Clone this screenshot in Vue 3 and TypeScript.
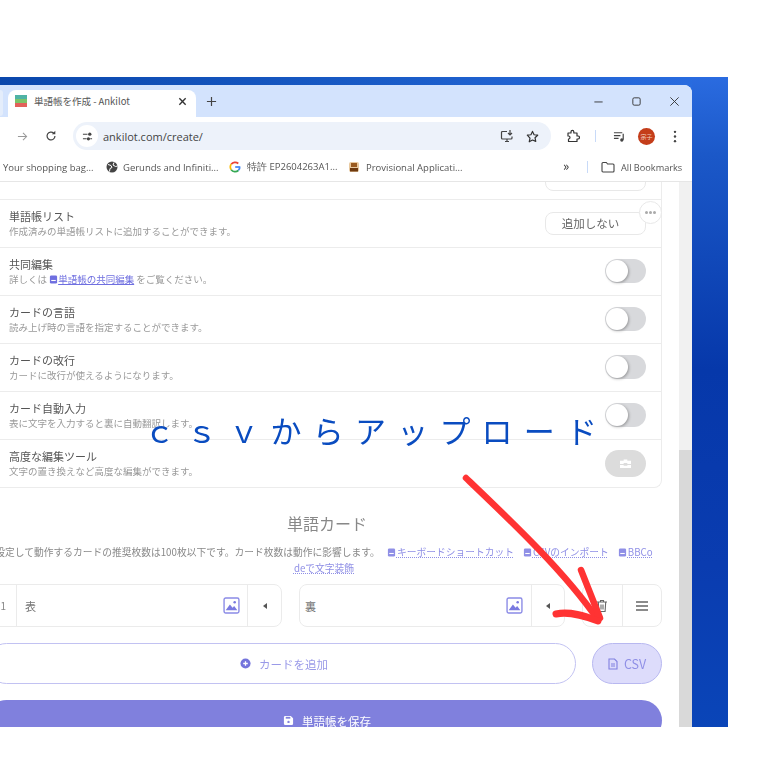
<script setup lang="ts">
interface Row { title: string; desc: string; kind: 'cut' | 'select' | 'link' | 'toggle' | 'tool' }
const rows: Row[] = [
  { title: '', desc: '作成者以外のユーザーが利用できる機能を制限します。', kind: 'cut' },
  { title: '単語帳リスト', desc: '作成済みの単語帳リストに追加することができます。', kind: 'select' },
  { title: '共同編集', desc: '', kind: 'link' },
  { title: 'カードの言語', desc: '読み上げ時の言語を指定することができます。', kind: 'toggle' },
  { title: 'カードの改行', desc: 'カードに改行が使えるようになります。', kind: 'toggle' },
  { title: 'カード自動入力', desc: '表に文字を入力すると裏に自動翻訳します。', kind: 'toggle' },
  { title: '高度な編集ツール', desc: '文字の置き換えなど高度な編集ができます。', kind: 'tool' },
]
</script>

<template>
  <div class="page">
    <div class="desktop">
      <div class="window">
        <div class="tabstrip">
          <div class="prevtab"></div>
          <div class="tab">
            <svg class="fav" viewBox="0 0 12 12" width="12" height="12">
              <rect y="0" width="12" height="4" fill="#4fb3a5" />
              <rect y="4" width="12" height="4" fill="#7cc36a" />
              <rect y="8" width="12" height="4" fill="#e2615a" />
            </svg>
            <span class="tabtitle">単語帳を作成 - Ankilot</span>
            <svg class="tabx" viewBox="0 0 10 10" width="9" height="9"><path d="M1.5 1.5l7 7M8.5 1.5l-7 7" stroke="#333" stroke-width="1.5" /></svg>
          </div>
          <svg class="plus" viewBox="0 0 12 12" width="11" height="11"><path d="M6 1v10M1 6h10" stroke="#444" stroke-width="1.3" /></svg>
          <div class="winbtns">
            <svg viewBox="0 0 12 12" width="11" height="11"><path d="M1.5 6.5h9" stroke="#333" stroke-width="1" /></svg>
            <svg viewBox="0 0 12 12" width="11" height="11"><rect x="2" y="2" width="8" height="8" rx="1.5" fill="none" stroke="#333" stroke-width="1" /></svg>
            <svg viewBox="0 0 12 12" width="11" height="11"><path d="M1.5 1.5l9 9M10.5 1.5l-9 9" stroke="#333" stroke-width="1" /></svg>
          </div>
        </div>

        <div class="toolbar">
          <svg class="nav-fwd" viewBox="0 0 12 12" width="11" height="11"><path d="M1 6h9.5M6.5 2l4 4-4 4" fill="none" stroke="#999" stroke-width="1.1" /></svg>
          <svg class="reload" viewBox="0 0 14 14" width="12" height="12"><path d="M11.6 7a4.6 4.6 0 1 1-1.4-3.3" fill="none" stroke="#444" stroke-width="1.4" /><path d="M12 1v4H8z" fill="#444" /></svg>
          <div class="omnibox">
            <span class="sitebtn">
              <svg viewBox="0 0 12 12" width="11" height="11"><path d="M1 3.5h5M9 8.500h2M1 8.500h4" stroke="#444" stroke-width="1.200" /><circle cx="8.500" cy="3.500" r="1.800" fill="#444" /><circle cx="7" cy="8.500" r="1.800" fill="#444" /></svg>
            </span>
            <span class="url">ankilot.com/create/</span>
            <svg class="omni-a" viewBox="0 0 14 14" width="14" height="14"><path d="M7 2.500H2.500a1 1 0 0 0-1 1V9a1 1 0 0 0 1 1h8.500a1 1 0 0 0 1-1V7.500M5 12.500h4M7 10v2.500" fill="none" stroke="#444" stroke-width="1.200" /><path d="M10 1v4.500M8 4l2 2 2-2" fill="none" stroke="#444" stroke-width="1.200" /></svg>
            <svg class="omni-b" viewBox="0 0 14 14" width="13" height="13"><path d="M7 1.500l1.700 3.600 3.900.5-2.900 2.700.8 3.900L7 10.800l-3.500 1.900.8-3.900L1.400 5.600l3.900-.5z" fill="none" stroke="#333" stroke-width="1.300" stroke-linejoin="round" /></svg>
          </div>
          <svg class="ext" viewBox="0 0 14 14" width="14" height="14"><path d="M2 4h3V2.800a1.400 1.400 0 0 1 2.800 0V4h3.200v3h1a1.500 1.500 0 0 1 0 3h-1v2.500H2.500V10a1.500 1.500 0 0 0 0-3H2z" fill="none" stroke="#333" stroke-width="1.200" stroke-linejoin="round" /></svg>
          <span class="tsep"></span>
          <svg class="music" viewBox="0 0 14 14" width="13" height="13"><path d="M1 3h9M1 6h7M1 9h5" stroke="#444" stroke-width="1.200" /><path d="M11 4v6.500" stroke="#444" stroke-width="1.300" /><circle cx="9.500" cy="10.800" r="1.800" fill="#444" /></svg>
          <span class="avatar">宗子</span>
          <svg class="dots" viewBox="0 0 4 14" width="4" height="13"><circle cx="2" cy="2" r="1.300" fill="#444" /><circle cx="2" cy="7" r="1.300" fill="#444" /><circle cx="2" cy="12" r="1.300" fill="#444" /></svg>
        </div>

        <div class="bookmarks">
          <span class="bm bm1">Your shopping bag...</span>
          <svg class="bmi" viewBox="0 0 12 12" width="12" height="12"><circle cx="6" cy="6" r="5.500" fill="#444" /><path d="M2 3.500l3 1 1 2-2 1-.5 3M8 1.500L7 4l2.500 1.500 2-.5" fill="none" stroke="#fff" stroke-width="1" /></svg>
          <span class="bm bm2">Gerunds and Infiniti...</span>
          <svg class="bmi" viewBox="0 0 12 12" width="12" height="12">
            <path d="M10.800 6H6.200" fill="none" stroke="#4285f4" stroke-width="1.700" />
            <path d="M10.700 5.500A4.800 4.800 0 0 1 9.300 9.500" fill="none" stroke="#4285f4" stroke-width="1.700" />
            <path d="M2.200 3.300A4.800 4.800 0 0 1 9.300 2.500" fill="none" stroke="#ea4335" stroke-width="1.700" />
            <path d="M2.200 8.700a4.800 4.800 0 0 1 0-5.400" fill="none" stroke="#fbbc05" stroke-width="1.700" />
            <path d="M2.200 8.700a4.800 4.800 0 0 0 7.100.8" fill="none" stroke="#34a853" stroke-width="1.700" />
          </svg>
          <span class="bm bm3">特許 EP2604263A1...</span>
          <svg class="bmi" viewBox="0 0 12 12" width="12" height="12"><rect x="1" y="1" width="10" height="10" rx="2" fill="#e8c9a0" /><rect x="3" y="2" width="6" height="4" fill="#9a5a20" /><rect x="2" y="7" width="8" height="3.500" fill="#6e3a10" /></svg>
          <span class="bm bm4">Provisional Applicati...</span>
          <span class="more">»</span>
          <span class="bsep"></span>
          <svg class="folder" viewBox="0 0 14 12" width="14" height="12"><path d="M1 2.500a1 1 0 0 1 1-1h3.300l1.300 1.500H12a1 1 0 0 1 1 1v6a1 1 0 0 1-1 1H2a1 1 0 0 1-1-1z" fill="none" stroke="#444" stroke-width="1.100" /></svg>
          <span class="bm bm5">All Bookmarks</span>
        </div>

        <div class="viewport">
          <div class="content">
            <div class="inner">
              <section class="panel">
                <div v-for="(r, i) in rows" :key="i" class="row">
                  <div class="rowtext">
                    <div v-if="r.title" class="rtitle">{{ r.title }}</div>
                    <div v-if="r.kind === 'link'" class="rdesc">
                      詳しくは
                      <span class="ilink">
                        <svg viewBox="0 0 10 10" width="9" height="9"><rect x="1" y="0.500" width="8" height="9" rx="1.500" fill="#6f6fe0" /><rect x="2.500" y="5.500" width="5" height="1.200" fill="#fff" /></svg>
                        <u>単語帳の共同編集</u>
                      </span>
                      をご覧ください。
                    </div>
                    <div v-else class="rdesc">{{ r.desc }}</div>
                  </div>
                  <span v-if="r.kind === 'cut'" class="selectbtn cutbtn"></span>
                  <template v-if="r.kind === 'select'">
                    <span class="selectbtn">追加しない</span>
                    <span class="morebtn"><i></i><i></i><i></i></span>
                  </template>
                  <span v-if="r.kind === 'toggle' || r.kind === 'link'" class="toggle"><span class="knob"></span></span>
                  <span v-if="r.kind === 'tool'" class="toolbtn">
                    <svg viewBox="0 0 14 12" width="13" height="11"><path d="M5 3V1.500h4V3h4v3.500H9V5.500H5v1H1V3zM1 7.500h4V8.500h4v-1h4V11H1z" fill="#fff" /></svg>
                  </span>
                </div>
              </section>

              <h2 class="heading">単語カード</h2>
              <p class="info">
                設定して動作するカードの推奨枚数は100枚以下です。カード枚数は動作に影響します。
                <a class="dl"><svg viewBox="0 0 10 10" width="9" height="9"><rect x="1" y="0.500" width="8" height="9" rx="1.500" fill="#8f8fe6" /><rect x="2.500" y="5.500" width="5" height="1.200" fill="#fff" /></svg>キーボードショートカット</a>
                <a class="dl"><svg viewBox="0 0 10 10" width="9" height="9"><rect x="1" y="0.500" width="8" height="9" rx="1.500" fill="#8f8fe6" /><rect x="2.500" y="5.500" width="5" height="1.200" fill="#fff" /></svg>CSVのインポート</a>
                <a class="dl"><svg viewBox="0 0 10 10" width="9" height="9"><rect x="1" y="0.500" width="8" height="9" rx="1.500" fill="#8f8fe6" /><rect x="2.500" y="5.500" width="5" height="1.200" fill="#fff" /></svg>BBCo<br />deで文字装飾</a>
              </p>

              <div class="cardrow">
                <div class="cardbox front">
                  <span class="num">1</span>
                  <span class="face">表</span>
                  <svg class="pic" viewBox="0 0 16 16" width="17" height="17"><rect x="1" y="1" width="14" height="14" rx="1.500" fill="#fff" stroke="#8b8be6" stroke-width="1.300" /><path d="M2.500 12.500l4-5.500 2.500 3 1.500-1.500 3 4z" fill="#7a7ae0" /><circle cx="11" cy="5" r="1.200" fill="#7a7ae0" /></svg>
                  <span class="caret"><i></i></span>
                </div>
                <div class="cardbox rear">
                  <span class="face">裏</span>
                  <svg class="pic" viewBox="0 0 16 16" width="17" height="17"><rect x="1" y="1" width="14" height="14" rx="1.500" fill="#fff" stroke="#8b8be6" stroke-width="1.300" /><path d="M2.500 12.500l4-5.500 2.500 3 1.500-1.500 3 4z" fill="#7a7ae0" /><circle cx="11" cy="5" r="1.200" fill="#7a7ae0" /></svg>
                  <span class="caret"><i></i></span>
                </div>
                <div class="cardbox actions">
                  <span class="act">
                    <svg viewBox="0 0 12 14" width="12" height="14"><path d="M1 3h10M4.500 3V1.500h3V3M2.300 3l.6 9.500h6.200l.6-9.500M5 5.500v5M7 5.500v5" fill="none" stroke="#666" stroke-width="1.100" /></svg>
                  </span>
                  <span class="act bars">
                    <svg viewBox="0 0 12 10" width="12" height="10"><path d="M0 1h12M0 5h12M0 9h12" stroke="#666" stroke-width="1.300" /></svg>
                  </span>
                </div>
              </div>

              <div class="btnrow">
                <button class="addbtn">
                  <svg viewBox="0 0 12 12" width="11" height="11"><circle cx="6" cy="6" r="5.500" fill="#7474dc" /><path d="M6 3.500v5M3.500 6h5" stroke="#fff" stroke-width="1.400" /></svg>
                  カードを追加
                </button>
                <button class="csvbtn">
                  <svg viewBox="0 0 10 12" width="10" height="12"><path d="M1 1h5.500L9 3.500V11H1z" fill="none" stroke="#8080e0" stroke-width="1.100" /><path d="M3 6h4M3 8h4" stroke="#8080e0" stroke-width="1" /></svg>
                  CSV
                </button>
              </div>

              <button class="savebtn">
                <svg viewBox="0 0 12 12" width="11" height="11"><path d="M1 2.500A1.500 1.500 0 0 1 2.500 1h6L11 3.500v6A1.500 1.500 0 0 1 9.500 11h-7A1.500 1.500 0 0 1 1 9.500z" fill="#fff" /><circle cx="6" cy="7.500" r="1.300" fill="#8080dd" /><rect x="3" y="2" width="5" height="2" fill="#8080dd" /></svg>
                単語帳を保存
              </button>
            </div>
          </div>
          <div class="scrollbar"><div class="thumb"></div></div>
        </div>
      </div>
    </div>

    <div class="handwriting">ｃｓｖからアップロード</div>
    <svg class="arrow" viewBox="0 0 768 768" width="768" height="768">
      <path d="M466 478C510 520 565 572 598 620" fill="none" stroke="#ff3333" stroke-width="6.500" stroke-linecap="round" />
      <path d="M581 570L600 618" fill="none" stroke="#ff3333" stroke-width="6.500" stroke-linecap="round" />
      <path d="M556 614C570 611 585 616 598 621" fill="none" stroke="#ff3333" stroke-width="7" stroke-linecap="round" />
    </svg>
  </div>
</template>

<style scoped>
.page {
  position: relative;
  width: 768px;
  height: 768px;
  background: #fff;
  overflow: hidden;
  padding-top: 77px;
  box-sizing: border-box;
  font-family: "Noto Sans CJK JP", "Noto Sans", sans-serif;
}
.desktop {
  width: 728px;
  height: 650px;
  box-sizing: border-box;
  padding: 8px 36px 0 0;
  background:
    linear-gradient(180deg, #2a6be0 0, #1b58c8 12%, #0638aa 45%, #0a3cb0 75%, #0a45b8 100%) right / 36px 100% no-repeat,
    linear-gradient(90deg, #0a47ac 0, #1a5cc8 55%, #2a6de2 100%);
}
.window {
  height: 100%;
  display: flex;
  flex-direction: column;
  background: #fff;
  border-radius: 0 8px 0 0;
  overflow: hidden;
  filter: blur(0.35px);
}
.tabstrip {
  height: 32px;
  flex: none;
  display: flex;
  align-items: flex-end;
  background: #d3e3fd;
}
.prevtab {
  width: 3px;
  height: 26px;
  margin: 0 5px 1px 0;
  background: #e4edfb;
  border-radius: 0 6px 6px 0;
}
.tab {
  width: 188px;
  height: 27px;
  flex: none;
  box-sizing: border-box;
  display: flex;
  align-items: center;
  padding: 0 0 5px 7px;
  background: #fff;
  border-radius: 8px 8px 0 0;
}
.tabtitle {
  margin-left: 7px;
  width: 142px;
  font-size: 9.5px;
  color: #555;
  white-space: nowrap;
}
.tabx { margin-left: 2px; }
.plus { margin: 0 0 10px 10px; }
.winbtns {
  margin-left: auto;
  display: flex;
  gap: 27px;
  padding-right: 12px;
  align-self: center;
}
.toolbar {
  height: 36px;
  flex: none;
  display: flex;
  align-items: center;
  box-sizing: border-box;
  padding-top: 2px;
}
.toolbar svg { flex: none; }
.nav-fwd { margin-left: 17px; }
.reload { margin-left: 17px; }
.omnibox {
  margin-left: 16px;
  width: 478px;
  flex: none;
  height: 28px;
  background: #edf2fa;
  border-radius: 14px;
  display: flex;
  align-items: center;
  box-sizing: border-box;
  padding-left: 3px;
}
.sitebtn {
  width: 22px;
  height: 22px;
  background: #fff;
  border-radius: 50%;
  display: flex;
  align-items: center;
  justify-content: center;
}
.url {
  margin-left: 5px;
  font-family: "Open Sans", sans-serif;
  font-size: 11px;
  color: #444;
}
.omni-a { margin-left: auto; }
.omni-b { margin: 0 12px 0 12px; }
.ext { margin-left: 15px; }
.tsep {
  width: 1px;
  height: 12px;
  margin-left: 15px;
  background: #c8daf8;
}
.music { margin-left: 17px; }
.avatar {
  width: 17px;
  height: 17px;
  flex: none;
  margin-left: 12px;
  border-radius: 50%;
  background: #c43d1a;
  color: #f3d0c0;
  font-size: 6px;
  display: flex;
  align-items: center;
  justify-content: center;
}
.dots { margin-left: 18px; }
.bookmarks {
  height: 29px;
  flex: none;
  display: flex;
  align-items: center;
  box-sizing: border-box;
  padding-left: 3px;
  border-bottom: 1px solid #e6e6e6;
}
.bm {
  font-family: "Open Sans", sans-serif;
  font-size: 9.5px;
  color: #555;
  white-space: nowrap;
}
.bm1 { width: 103px; }
.bm2 { width: 106px; margin-left: 5px; }
.bm3 { width: 101px; margin-left: 6px; }
.bm4 { width: 197px; margin-left: 6px; }
.bm5 { font-size: 9.2px; }
.bmi { flex: none; }
.more { width: 14px; font-size: 13px; color: #333; line-height: 1; margin-top: -3px; }
.bsep { width: 1px; height: 12px; margin: 0 13px 0 10px; background: #c8daf8; }
.folder { margin-right: 6px; flex: none; }
.viewport {
  flex: 1;
  min-height: 0;
  display: flex;
  overflow: hidden;
}
.content {
  flex: 1;
  min-width: 0;
  overflow: hidden;
}
.inner {
  width: 676px;
  margin: -30px 0 0 -14px;
}
.scrollbar {
  width: 13px;
  flex: none;
  background: #f1f1f1;
  display: flex;
  flex-direction: column;
  justify-content: flex-end;
}
.thumb { height: 277px; background: #d9d9d9; }
.panel {
  border-right: 1px solid #ececec;
  border-bottom: 1px solid #ececec;
  border-radius: 0 0 8px 0;
}
.row {
  position: relative;
  height: 48px;
  box-sizing: border-box;
  display: flex;
  align-items: center;
  justify-content: space-between;
  padding: 0 15px 0 23px;
  border-bottom: 1px solid #ececec;
}
.row:last-child { border-bottom: 0; height: 47px; }
.rowtext { padding-bottom: 1px; }
.rtitle {
  font-size: 11px;
  line-height: 16px;
  color: #555;
  white-space: nowrap;
}
.rdesc {
  font-size: 9.5px;
  line-height: 14px;
  color: #999;
  white-space: nowrap;
}
.ilink { color: #6f6fe0; }
.ilink svg { vertical-align: -1px; }
.selectbtn {
  width: 101px;
  height: 23px;
  margin-bottom: 1px;
  box-sizing: border-box;
  border: 1px solid #e8e8e8;
  border-radius: 8px;
  font-size: 11.5px;
  color: #666;
  display: flex;
  align-items: center;
  justify-content: center;
  padding-right: 10px;
  background: #fff;
}
.cutbtn { position: absolute; right: 15px; top: 16px; }
.morebtn {
  position: absolute;
  right: -1px;
  top: 1px;
  width: 23px;
  height: 23px;
  box-sizing: border-box;
  border: 1px solid #e8e8e8;
  border-radius: 50%;
  background: #fff;
  display: flex;
  align-items: center;
  justify-content: center;
  gap: 1px;
}
.morebtn i {
  width: 3px;
  height: 3px;
  border-radius: 50%;
  background: #aaa;
}
.toggle {
  width: 41px;
  height: 24px;
  margin-bottom: 1px;
  border-radius: 12px;
  background: #d8d9dc;
  position: relative;
  flex: none;
}
.knob {
  position: absolute;
  left: 1px;
  top: 1px;
  width: 22px;
  height: 22px;
  border-radius: 50%;
  background: #fff;
  box-shadow: 1px 1px 3px rgba(0, 0, 0, 0.3);
}
.toolbtn {
  width: 41px;
  height: 27px;
  margin-bottom: 1px;
  border-radius: 14px;
  background: #dcdcdc;
  display: flex;
  align-items: center;
  justify-content: center;
}
.heading {
  margin: 24px 0 0;
  padding-left: 6px;
  text-align: center;
  font-size: 16px;
  line-height: 22px;
  font-weight: 400;
  color: #888;
}
.info {
  margin: 10px 0 0;
  font-size: 9.75px;
  line-height: 16px;
  color: #888;
  text-align: center;
  height: 32px;
  word-break: break-all;
}
.dl {
  color: #8f8fe6;
  font-size: 9.75px;
  text-decoration: underline dotted;
  margin-left: 5px;
}
.dl + .dl { margin-left: 9px; }
.dl svg { vertical-align: -1px; margin-right: 1px; }
.cardrow {
  display: flex;
  margin-top: 8px;
  height: 43px;
  gap: 17px;
}
.cardbox {
  height: 43px;
  flex: none;
  box-sizing: border-box;
  border: 1px solid #ebebeb;
  border-radius: 8px;
  display: flex;
  align-items: center;
  background: #fff;
}
.num {
  width: 30px;
  height: 100%;
  box-sizing: border-box;
  text-align: right;
  padding-right: 10px;
  line-height: 41px;
  font-size: 10px;
  color: #888;
  border-right: 1px solid #ebebeb;
}
.face { margin-left: 8px; font-size: 11px; color: #777; flex: 1; }
.pic { flex: none; }
.caret {
  width: 33px;
  height: 100%;
  margin-left: 7px;
  border-left: 1px solid #ebebeb;
  display: flex;
  align-items: center;
  justify-content: center;
}
.caret i {
  border: 3px solid transparent;
  border-right: 4px solid #555;
  border-left: 0;
}
.front { width: 296px; border-radius: 0 8px 8px 0; }
.rear { width: 266px; }
.rear .face { margin-left: 5px; }
.rear .caret { width: 32px; margin-left: 8px; }
.actions { width: 80px; }
.act {
  width: 39px;
  height: 100%;
  display: flex;
  align-items: center;
  justify-content: center;
}
.bars { border-left: 1px solid #ebebeb; }
.btnrow {
  display: flex;
  gap: 16px;
  margin-top: 16px;
}
button {
  font-family: inherit;
  cursor: pointer;
}
.addbtn {
  width: 591px;
  height: 41px;
  padding: 0 0 0 6px;
  border: 1.5px solid #c2c2f2;
  border-radius: 21px;
  background: #fff;
  color: #9a9ae8;
  font-size: 11.5px;
  display: flex;
  align-items: center;
  justify-content: center;
  gap: 8px;
}
.csvbtn {
  width: 70px;
  height: 41px;
  padding: 0;
  border: 1.5px solid #b8b8f0;
  border-radius: 21px;
  background: #dddcfb;
  color: #8f8fe6;
  font-size: 12.5px;
  display: flex;
  align-items: center;
  justify-content: center;
  gap: 6px;
}
.savebtn {
  margin-top: 16px;
  width: 100%;
  height: 41px;
  padding: 0 0 0 6px;
  border: 0;
  border-radius: 21px;
  background: #8080dd;
  color: #fff;
  font-size: 11.5px;
  display: flex;
  align-items: center;
  justify-content: center;
  gap: 8px;
}
.handwriting {
  position: absolute;
  left: 144px;
  top: 408px;
  font-size: 31px;
  line-height: 44px;
  letter-spacing: 11.2px;
  font-weight: 400;
  color: #0a4cc0;
  white-space: nowrap;
}
.arrow {
  position: absolute;
  left: 0;
  top: 0;
  pointer-events: none;
}
</style>
